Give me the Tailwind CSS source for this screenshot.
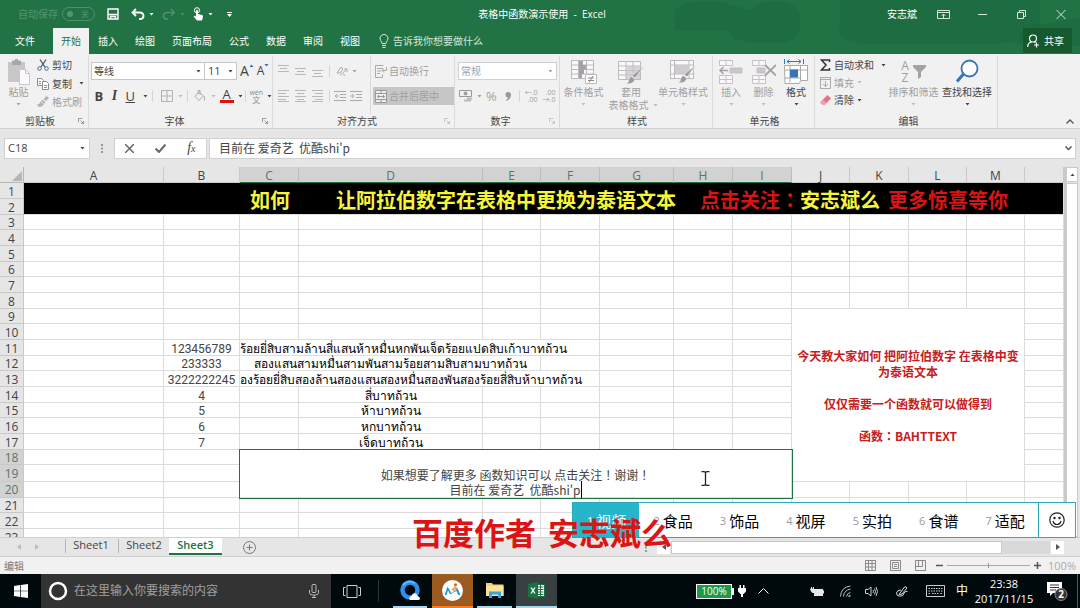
<!DOCTYPE html>
<html lang="zh-CN">
<head>
  <meta charset="UTF-8"/>
  <meta name="viewport" content="width=device-width, initial-scale=1.0"/>
  <title>表格中函数演示使用 - Excel</title>
  <script src="https://cdn.jsdelivr.net/npm/@tailwindcss/browser@4"></script>
</head>
<body class="relative flex h-screen flex-col overflow-hidden bg-[#e6e6e6] font-['Open_Sans','Noto_Sans_CJK_SC',sans-serif] text-[10px] leading-[14px] whitespace-nowrap text-[#444]">

  <svg class="hidden">
    <symbol id="caret" viewBox="0 0 5 3"><path d="M.5 0h4L2.500 2.500z" fill="currentColor"/></symbol>
    <symbol id="launcher" viewBox="0 0 7 7"><path d="M.5 5V.5H5M3 3l3 3M6.500 3.500v3h-3" fill="none" stroke="currentColor"/></symbol>
  </svg>

  <!-- Title bar -->
  <header class="relative shrink-0 bg-[#217346] text-white">
    <svg class="absolute top-0 right-0 h-[52px] w-[405px]" viewBox="0 0 405 52" fill="#1c653c" fill-opacity=".5">
      <path d="M0 10q12-12 45-8l30 8q10-10 28-9 22 2 22 18 4 22-20 24H78q-26-4-22-12L0 30z"/>
      <path d="M165 0h200v30q-10 12-50 14H190q-30-2-25-20z"/>
      <path d="M342 44q6-20 25-20l38-6v28z"/>
    </svg>
    <div class="relative flex h-7 items-center">
      <div class="flex flex-1 items-center pl-[18px]">
        <span class="text-[#56946f]">自动保存</span>
        <button class="ml-1 flex h-[14px] w-[33px] items-center rounded-full border border-[#4f8f6b] px-1 text-[#56946f]" aria-label="自动保存"><span class="mr-2 size-[6px] rounded-full bg-[#56946f]"></span><span class="text-[8px] leading-[10px]">关</span></button>
        <button class="ml-3" aria-label="保存"><svg class="size-3" viewBox="0 0 12 12" fill="none" stroke="#fff" stroke-width="1.400"><path d="M1 1h10v10H1z"/><path d="M1 6.500h10M3.500 11V8.500h5V11"/></svg></button>
        <button class="ml-3" aria-label="撤消"><svg class="h-3 w-[14px]" viewBox="0 0 14 12" fill="none" stroke="#fff" stroke-width="1.800"><path d="M5 1L1.500 4.500 5 8M2 4.500h6.500q4 .2 4 3.600Q12.300 11 9 11H8"/></svg></button>
        <svg class="ml-1 h-[3px] w-[5px]"><use href="#caret"/></svg>
        <button class="ml-2 text-[#4f8f6b]" aria-label="恢复"><svg class="h-3 w-[14px]" viewBox="0 0 14 12" fill="none" stroke="currentColor" stroke-width="1.500"><path d="M9 1l3.500 3.500L9 8M12 4.500H5.500q-4 .2-4 3.600Q1.700 11 5 11h1"/></svg></button>
        <svg class="ml-1 h-[3px] w-[5px] text-[#4f8f6b]"><use href="#caret"/></svg>
        <button class="ml-2" aria-label="触摸/鼠标模式"><svg class="h-[14px] w-[11px]" viewBox="0 0 11 14"><circle cx="4" cy="3.300" r="2.600" fill="none" stroke="#fff"/><path d="M3 3.500q1-1.300 2 0V7l4 1q1.300.4 1 2l-1 3.500H4L.6 9.500q.6-1.300 1.700-.6l.7.8z" fill="#fff"/></svg></button>
        <svg class="ml-1 h-[3px] w-[5px]"><use href="#caret"/></svg>
        <svg class="ml-[14px] h-[5px] w-[5px]" viewBox="0 0 5 5" fill="#fff"><path d="M0 0h5v1H0zM0 2h5L2.500 5z"/></svg>
      </div>
      <h1>表格中函数演示使用 &nbsp;- &nbsp;Excel</h1>
      <div class="flex flex-1 items-center justify-end pr-[14px]">
        <span>安志斌</span>
        <button class="ml-5" aria-label="功能区显示选项"><svg class="h-[9px] w-[13px]" viewBox="0 0 13 9" fill="none" stroke="#d5e5db"><path d="M.5.5h12v8H.5zM.5 2.500h12M6.500 8V4M4.500 6l2-2 2 2"/></svg></button>
        <button class="ml-7" aria-label="最小化"><svg class="h-[9px] w-[9px]" viewBox="0 0 9 9" stroke="#d5e5db"><path d="M0 4.500h9"/></svg></button>
        <button class="ml-[30px]" aria-label="还原"><svg class="h-[9px] w-[9px]" viewBox="0 0 9 9" fill="none" stroke="#d5e5db"><path d="M.5 2.500h6v6h-6zM2.500 2.500v-2h6v6h-2"/></svg></button>
        <button class="ml-[30px]" aria-label="关闭"><svg class="h-[9px] w-[10px]" viewBox="0 0 9 9" stroke="#d5e5db"><path d="M0 0l9 9M9 0L0 9"/></svg></button>
      </div>
    </div>

    <!-- Ribbon tabs -->
    <nav class="relative flex h-[26px] items-stretch gap-px">
      <a href="#" class="flex w-[52px] items-center pl-[15px]">文件</a>
      <a href="#" class="flex items-center bg-[#f1f1f1] px-2 text-[#217346]">开始</a>
      <a href="#" class="flex items-center px-2">插入</a>
      <a href="#" class="flex items-center px-2">绘图</a>
      <a href="#" class="flex items-center px-2">页面布局</a>
      <a href="#" class="flex items-center px-2">公式</a>
      <a href="#" class="flex items-center px-2">数据</a>
      <a href="#" class="flex items-center px-2">审阅</a>
      <a href="#" class="flex items-center px-2">视图</a>
      <a href="#" class="flex items-center gap-1 pl-[10px] text-[#d3e5da]"><svg class="h-[14px] w-[10px]" viewBox="0 0 10 14" fill="none" stroke="currentColor"><path d="M3 9.500Q3 8 1.700 6.700A4 4 0 1 1 8.300 6.700Q7 8 7 9.500zM3 11.500h4M3.500 13.500h3"/></svg>告诉我你想要做什么</a>
      <button class="mr-2 mb-px ml-auto flex w-[49px] items-center gap-1 bg-[#17592f] pl-1"><svg class="h-[14px] w-[13px]" viewBox="0 0 13 14" fill="none" stroke="#fff" stroke-width="1.200"><circle cx="6" cy="4.500" r="3.500"/><path d="M.7 13q0-4.500 4-5M7 8q1 0 1.500.7M9.500 8.500v5M7 11h5"/></svg>共享</button>
    </nav>
  </header>

  <!-- Ribbon -->
  <section class="flex h-[75px] shrink-0 border-b border-[#d2d2d2] bg-[#f1f1f1]">

    <div class="mt-[2px] flex w-[89px] shrink-0 flex-col border-r border-[#dadada]">
      <div class="flex flex-1">
        <button class="flex w-[37px] flex-col items-center pt-[3px] text-[#a19fa1]">
          <svg class="h-[26px] w-6" viewBox="0 0 24 26"><path d="M1 3h17v20H1z" fill="#c9c6c9"/><path d="M5 1.500h9V6H5z" fill="#a9a7a9"/><path d="M8 0h3v3H8z" fill="#a9a7a9"/><path d="M12.500 10.500h6l4 4v11h-10z" fill="#fbf9fb" stroke="#c9c6c9"/><path d="M18.500 10.500v4h4" fill="none" stroke="#c9c6c9"/></svg>
          粘贴
          <svg class="mt-1 h-[3px] w-[5px]"><use href="#caret"/></svg>
        </button>
        <div class="flex flex-col">
          <button class="flex h-[18px] items-center gap-[3px]"><svg class="size-3" viewBox="0 0 12 12" fill="none"><path d="M3 .5l5 7.500M9 .5L4 8" stroke="#555" stroke-width="1.300"/><circle cx="2.500" cy="9.500" r="1.800" stroke="#3a6ea5"/><circle cx="9.500" cy="9.500" r="1.800" stroke="#3a6ea5"/></svg>剪切</button>
          <button class="flex h-[19px] items-center gap-[3px]"><svg class="size-3" viewBox="0 0 12 12" fill="#fff" stroke="#8c8c8c"><path d="M.5.5h4l2 2v5h-6z"/><path d="M5.500 3.500h4l2 2v6h-6z"/><path d="M7 7.500h3M7 9.500h3M2 3.500h2M2 5.500h2" stroke="#6b93bd"/></svg>复制<svg class="ml-1 h-[3px] w-[5px]"><use href="#caret"/></svg></button>
          <button class="flex h-[18px] items-center gap-[3px] text-[#a19fa1]"><svg class="size-3" viewBox="0 0 12 12" fill="#b5b3b5"><path d="M9.500 0L12 2 9 5 6.500 3zM5.500 3.500l3 3L7 8 4 5zM3.500 5.500l3.300 3.300Q5 11 1.500 11L0 8.500q2.500 0 3.500-3z"/></svg>格式刷</button>
        </div>
      </div>
      <div class="flex h-[14px] items-center pr-1"><span class="flex-1 pl-[2px] text-center">剪贴板</span><svg class="size-[6px] text-[#888]"><use href="#launcher"/></svg></div>
    </div>

    <div class="mt-[2px] flex w-[184px] shrink-0 flex-col border-r border-[#dadada] pl-[2px]">
      <div class="flex flex-1 flex-col gap-[7px] pt-[6px]">
        <div class="flex h-[18px] items-center">
          <div class="flex h-[18px] w-[114px] items-center border border-[#c6c6c6] bg-white pr-[3px]"><select class="flex-1 appearance-none px-[2px]" aria-label="字体"><option>等线</option></select><svg class="h-[3px] w-[5px]"><use href="#caret"/></svg></div>
          <div class="-ml-px flex h-[18px] w-[33px] items-center border border-[#c6c6c6] bg-white pr-[3px]"><select class="w-5 flex-1 appearance-none px-[3px] text-[11px]" aria-label="字号"><option>11</option></select><svg class="h-[3px] w-[5px]"><use href="#caret"/></svg></div>
          <button class="ml-[3px] flex items-start text-[14px] font-medium" aria-label="增大字号">A<svg class="h-[3px] w-[5px] rotate-180 text-[#3a6ea5]"><use href="#caret"/></svg></button>
          <button class="ml-[3px] flex items-start text-[12px] font-medium" aria-label="减小字号">A<svg class="h-[3px] w-[5px] text-[#3a6ea5]"><use href="#caret"/></svg></button>
        </div>
        <div class="flex h-[18px] items-center text-[13px]">
          <button class="w-4 font-bold">B</button>
          <button class="w-4 font-['Liberation_Serif'] text-[14px] font-bold italic">I</button>
          <button class="w-4 underline">U</button>
          <svg class="ml-[5px] h-[3px] w-[5px]"><use href="#caret"/></svg>
          <span class="mx-1 h-3 w-px bg-[#d5d5d5]"></span>
          <button class="ml-1" aria-label="边框"><svg class="size-3" viewBox="0 0 12 12" fill="none" stroke="#b3b1b3"><path d="M.5.5h11v11H.5zM6 .5v11M.5 6h11"/></svg></button>
          <svg class="ml-[5px] h-[3px] w-[5px] text-[#bbb]"><use href="#caret"/></svg>
          <span class="mr-[6px] ml-1 h-3 w-px bg-[#d5d5d5]"></span>
          <button aria-label="填充颜色"><svg class="size-3" viewBox="0 0 12 12" fill="none" stroke="#aaa"><path d="M5 2L1 6.500l4 4 4.500-4.500zM4 4V.5h2V5M10.500 6.500v4"/></svg></button>
          <svg class="ml-[5px] h-[3px] w-[5px] text-[#bbb]"><use href="#caret"/></svg>
          <button class="ml-1 flex h-[14px] w-[14px] items-end justify-center border-b-3 border-[#e01010] leading-[12px]" aria-label="字体颜色">A</button>
          <svg class="ml-1 h-[3px] w-[5px]"><use href="#caret"/></svg>
          <span class="mx-[3px] h-3 w-px bg-[#d5d5d5]"></span>
          <button class="flex flex-col items-center text-[7px] leading-[7px] text-[#8c8c8c]" aria-label="拼音"><span>wén</span><span class="text-[8px]">文</span></button>
          <svg class="ml-1 h-[3px] w-[5px]"><use href="#caret"/></svg>
        </div>
      </div>
      <div class="flex h-[14px] items-center pr-1"><span class="flex-1 pr-1 text-center">字体</span><svg class="size-[6px] text-[#888]"><use href="#launcher"/></svg></div>
    </div>

    <div class="mt-[2px] flex w-[182px] shrink-0 flex-col border-r border-[#dadada] pl-[5px]">
      <div class="flex flex-1 text-[#a19fa1]">
        <div class="flex w-[92px] flex-col gap-[7px] pt-[6px]">
          <div class="flex h-[18px] items-center gap-[6px]">
            <button aria-label="顶端对齐"><svg class="h-3 w-[11px]" viewBox="0 0 11 12" stroke="#b9b7b9"><path d="M0 .5h11M2 3.500h7M0 6.500h11"/></svg></button>
            <button aria-label="垂直居中"><svg class="h-3 w-[11px]" viewBox="0 0 11 12" stroke="#b9b7b9"><path d="M0 3.500h11M2 6.500h7M0 9.500h11"/></svg></button>
            <button aria-label="底端对齐"><svg class="h-3 w-[11px]" viewBox="0 0 11 12" stroke="#b9b7b9"><path d="M0 5.500h11M2 8.500h7M0 11.500h11"/></svg></button>
            <span class="h-3 w-px bg-[#d5d5d5]"></span>
            <button aria-label="方向"><svg class="size-3" viewBox="0 0 12 12" fill="none" stroke="#aaa"><path d="M1 8l4-6 2 2-3 4zM4 10.500L11 4M11 7V4H8M7 9.500l2 1"/></svg></button>
            <svg class="-ml-[2px] h-[3px] w-[5px]"><use href="#caret"/></svg>
          </div>
          <div class="flex h-[18px] items-center gap-[6px]">
            <button aria-label="左对齐"><svg class="h-3 w-[11px]" viewBox="0 0 11 12" stroke="#b9b7b9"><path d="M0 .5h11M0 3.500h8M0 6.500h11M0 9.500h8M0 11.500h11"/></svg></button>
            <button aria-label="居中"><svg class="h-3 w-[11px]" viewBox="0 0 11 12" stroke="#b9b7b9"><path d="M0 .5h11M2 3.500h7M0 6.500h11M2 9.500h7M0 11.500h11"/></svg></button>
            <button aria-label="右对齐"><svg class="h-3 w-[11px]" viewBox="0 0 11 12" stroke="#b9b7b9"><path d="M0 .5h11M3 3.500h8M0 6.500h11M3 9.500h8M0 11.500h11"/></svg></button>
            <span class="-mr-[2px] h-3 w-px bg-[#d5d5d5]"></span>
            <button aria-label="减少缩进量"><svg class="h-[11px] w-3" viewBox="0 0 12 11" fill="none" stroke="#aaa"><path d="M0 .5h12M6 3.500h6M6 6.500h6M0 9.500h12M5 5H1M3 3L1 5l2 2"/></svg></button>
            <button class="-ml-[2px]" aria-label="增加缩进量"><svg class="h-[11px] w-3" viewBox="0 0 12 11" fill="none" stroke="#aaa"><path d="M0 .5h12M6 3.500h6M6 6.500h6M0 9.500h12M0 5h4M2 3l2 2-2 2"/></svg></button>
          </div>
        </div>
        <div class="flex flex-col gap-[7px] border-l border-[#dadada] pt-[6px] pl-[2px]">
          <button class="flex h-[18px] items-center gap-[2px] pl-[2px]"><svg class="h-[13px] w-3" viewBox="0 0 12 13" fill="none" stroke="#aaa"><path d="M.5.5h8M.5.500v12h7v-3M2 3.500h6M2 6h4M2 8.500h3M11.500 2v3.500h-4M9 3.500l-2 2 2 2"/></svg>自动换行</button>
          <button class="flex h-[18px] w-[81px] items-center gap-[2px] bg-[#c6c6c6] pl-[2px]"><svg class="h-[13px] w-3" viewBox="0 0 12 13" fill="#eee" stroke="#999"><path d="M.5.500h11v12H.5zM6 .5v3M6 9.500v3M.5 3.500h11v6H.5zM2.500 6.500h7M4 5L2.500 6.500 4 8M8 5l1.500 1.500L8 8"/></svg>合并后居中</button>
        </div>
      </div>
      <div class="flex h-[14px] items-center pr-1"><span class="flex-1 pr-2 text-center">对齐方式</span><svg class="size-[6px] text-[#bbb]"><use href="#launcher"/></svg></div>
    </div>

    <div class="mt-[2px] flex w-[105px] shrink-0 flex-col border-r border-[#dadada] pl-[3px]">
      <div class="flex flex-1 flex-col gap-[7px] pt-[6px] text-[#a19fa1]">
        <div class="flex h-[18px] w-[99px] items-center border border-[#d0d0d0] bg-white pr-[3px]"><select class="flex-1 appearance-none px-[2px]" aria-label="数字格式"><option>常规</option></select><svg class="h-[3px] w-[5px]"><use href="#caret"/></svg></div>
        <div class="flex h-[18px] items-center">
          <button class="ml-px" aria-label="会计数字格式"><svg class="h-3 w-[14px]" viewBox="0 0 14 12" fill="none" stroke="#999"><path d="M.5.5h12v6H.5z"/><circle cx="6.500" cy="3.500" r="1.500" fill="#999"/><path d="M8 8.500h5M5 10.500h7" stroke="#bbb" stroke-width="2"/></svg></button>
          <svg class="ml-1 h-[3px] w-[5px]"><use href="#caret"/></svg>
          <button class="ml-1 text-[13px]" aria-label="百分比样式">%</button>
          <button class="ml-2" aria-label="千位分隔样式"><svg class="h-[9px] w-[6px]" viewBox="0 0 6 9" fill="#999"><path d="M3 0q3 0 3 3 0 4-4.500 6L1 8q2-1.200 2.200-2.600Q.5 5.500.5 2.700.5 0 3 0z"/></svg></button>
          <span class="mr-[5px] ml-2 h-3 w-px bg-[#d5d5d5]"></span>
          <button class="flex flex-col items-end text-[7px] leading-[7px]" aria-label="增加小数位数"><span>←.0</span><span>.00</span></button>
          <button class="ml-[5px] flex flex-col items-end text-[7px] leading-[7px]" aria-label="减少小数位数"><span>.00</span><span>→.0</span></button>
        </div>
      </div>
      <div class="flex h-[14px] items-center pr-1"><span class="flex-1 pr-[6px] text-center">数字</span><svg class="size-[6px] text-[#bbb]"><use href="#launcher"/></svg></div>
    </div>

    <div class="mt-[2px] flex w-[153px] shrink-0 flex-col border-r border-[#dadada] pl-[2px]">
      <div class="flex flex-1 pt-[3px] text-[#a19fa1]">
        <button class="flex w-[43px] flex-col items-center">
          <svg class="h-[26px] w-[26px]" viewBox="0 0 26 26" fill="none" stroke="#bdb9bd"><path d="M.5 1.500h22v18H.5zM.5 6h22M.5 10.500h22M.5 15h22M7.500 1.500v18M15.500 1.500v18" fill="#fbf8fb"/><path d="M8 2h4v4H8zM8 6h7v4.500H8zM8 10.500h5V15H8zM8 15h3v4H8z" fill="#a5a1a5" stroke="none"/><path d="M14.500 15.500h11v9h-11z" fill="#fff"/><path d="M17 19h6M17 21.500h6M22 17l-4 6.500" stroke="#888"/></svg>
          条件格式
          <svg class="mt-1 h-[3px] w-[5px] text-[#bbb]"><use href="#caret"/></svg>
        </button>
        <button class="flex w-[52px] flex-col items-center">
          <svg class="h-[26px] w-[26px]" viewBox="0 0 26 26" fill="none" stroke="#bdb9bd"><path d="M.5 2.500h22v18H.5zM.5 7h22M.5 11.500h22M.5 16h22M8 2.500v18M15 2.500v18" fill="#fbf8fb"/><path d="M8 7h14v13H8z" fill="#c9c6c9" stroke="none" fill-opacity=".7"/><path d="M26 7L17 19l-3-2.500zM13.500 17.500l3.500 3q-2 5-9 4.500 3-1.500 2.500-4 1-3 3-3.500z" fill="#9d9a9d" stroke="#f1f1f1" stroke-width=".6"/></svg>
          <span>套用</span>
          <span class="-mt-px flex items-center gap-1 pl-1">表格格式<svg class="h-[3px] w-[5px] text-[#bbb]"><use href="#caret"/></svg></span>
        </button>
        <button class="flex w-[52px] flex-col items-center">
          <svg class="h-[26px] w-[26px]" viewBox="0 0 26 26" fill="none" stroke="#bdb9bd"><path d="M.5 1.500h23v18H.5zM.5 6h23M.5 15h23M4.500 1.500v18M19 1.500v18" fill="#fbf8fb"/><path d="M5 6h14v9H5z" fill="#cfcccf" stroke="none"/><path d="M26 6L17 18l-3-2.500zM13.500 16.500l3.500 3q-2 5-9 4.500 3-1.500 2.500-4 1-3 3-3.500z" fill="#9d9a9d" stroke="#f1f1f1" stroke-width=".6"/></svg>
          单元格样式
          <svg class="mt-1 h-[3px] w-[5px] text-[#bbb]"><use href="#caret"/></svg>
        </button>
      </div>
      <div class="h-[14px] text-center">样式</div>
    </div>

    <div class="mt-[2px] flex w-[102px] shrink-0 flex-col border-r border-[#dadada] pl-[2px]">
      <div class="flex flex-1 pt-[3px]">
        <button class="flex w-8 flex-col items-center text-[#a19fa1]">
          <svg class="h-[26px] w-6" viewBox="0 0 24 26" fill="#faf6fa" stroke="#c9bfc9"><path d="M.5 1.500h13v5H.5zM7 1.500v5M.5 16.500h13v8H.5zM7 16.500v8M.5 20.500h13"/><path d="M11 9h12v5H11z" fill="#c9c6c9"/><path d="M9 11.500H1M4.500 8L1 11.500 4.500 15" fill="none" stroke="#a5a1a5" stroke-width="1.500"/></svg>
          插入
          <svg class="mt-1 h-[3px] w-[5px] text-[#bbb]"><use href="#caret"/></svg>
        </button>
        <button class="flex w-[33px] flex-col items-center text-[#a19fa1]">
          <svg class="h-[26px] w-6" viewBox="0 0 24 26" fill="#faf6fa" stroke="#c9bfc9"><path d="M.5 1.500h13v5H.5zM7 1.500v5M.5 16.500h13v8H.5zM7 16.500v8M.5 20.500h13"/><path d="M5 9h8v5H5z" fill="#c9c6c9"/><path d="M13 6l11 10.500M24 6L13 16.500" fill="none" stroke="#a5a1a5" stroke-width="1.800"/></svg>
          删除
          <svg class="mt-1 h-[3px] w-[5px] text-[#bbb]"><use href="#caret"/></svg>
        </button>
        <button class="flex w-8 flex-col items-center">
          <svg class="h-[26px] w-6" viewBox="0 0 24 26" fill="#fff" stroke="#a9a9a9"><path d="M.5 6.500h23v15H17l-2 3H1z"/><path d="M.5 11h23M.5 19h17M6 6.500v17M16.500 6.500v15" fill="none"/><path d="M6 10.500h8v8H6z" fill="#3575b5" stroke="none"/><path d="M.5 0v5M19.500 0v5M3 2.500h14M5.500.500l-2.500 2 2.500 2M14.500.500l2.500 2-2.500 2" fill="none" stroke="#3575b5"/></svg>
          格式
          <svg class="mt-1 h-[3px] w-[5px]"><use href="#caret"/></svg>
        </button>
      </div>
      <div class="h-[14px] text-center">单元格</div>
    </div>

    <div class="mt-[2px] flex w-[183px] shrink-0 flex-col border-r border-[#dadada] pl-[5px]">
      <div class="flex flex-1">
        <div class="flex w-[67px] flex-col">
          <button class="flex h-[18px] items-center gap-[3px]"><svg class="h-3 w-[11px]" viewBox="0 0 11 12" fill="none" stroke="#333" stroke-width="1.500"><path d="M9.500 3V1H1.500L6 6l-4.500 5h8V9"/></svg>自动求和<svg class="ml-1 h-[3px] w-[5px]"><use href="#caret"/></svg></button>
          <button class="flex h-[17px] items-center gap-[3px] text-[#a19fa1]"><svg class="h-3 w-[11px]" viewBox="0 0 11 12" fill="none" stroke="#aaa"><path d="M.5.500h10v11H.5zM.5 2.500h10M5.500 4v5.500M3 7l2.500 2.500L8 7"/></svg>填充<svg class="h-[3px] w-[5px] text-[#bbb]"><use href="#caret"/></svg></button>
          <button class="flex h-[18px] items-center gap-[3px]"><svg class="h-3 w-[11px]" viewBox="0 0 11 12"><path d="M7.500 1L11 4.500 4.500 11 1 7.500z" fill="#e3728a"/><path d="M3 5.500L6.500 9l-2 2h-2L0 8.500z" fill="#ef9fb0"/></svg>清除<svg class="h-[3px] w-[5px]"><use href="#caret"/></svg></button>
        </div>
        <button class="flex w-[53px] flex-col items-center pt-[3px] text-[#a19fa1]">
          <span class="flex h-[26px] items-center"><span class="flex flex-col text-[12px] leading-[12px]"><span>A</span><span>Z</span></span><svg class="ml-1 h-[14px] w-[13px]" viewBox="0 0 13 14" fill="#a5a1a5"><path d="M0 0h13v2L8 7v5l-3 2V7L0 2z"/></svg></span>
          排序和筛选
          <svg class="mt-1 h-[3px] w-[5px] text-[#bbb]"><use href="#caret"/></svg>
        </button>
        <button class="flex w-[54px] flex-col items-center pt-[3px]">
          <svg class="h-[26px] w-6" viewBox="0 0 24 26" fill="#fff" stroke="#3575b5"><path d="M8.500 15L2 22.500" stroke-width="3"/><circle cx="14.500" cy="9.500" r="8" stroke-width="1.800"/></svg>
          查找和选择
          <svg class="mt-1 h-[3px] w-[5px]"><use href="#caret"/></svg>
        </button>
      </div>
      <div class="h-[14px] text-center">编辑</div>
    </div>

    <button class="mt-auto mr-[6px] mb-1 ml-auto" aria-label="折叠功能区"><svg class="h-[5px] w-2" viewBox="0 0 8 5" fill="none" stroke="#555" stroke-width="1.300"><path d="M.5 4.500L4 1l3.500 3.500"/></svg></button>
  </section>

  <!-- Formula bar -->
  <section class="flex h-[38px] shrink-0 items-center px-1">
    <div class="flex h-[21px] w-[86px] items-center border border-[#d0d0d0] bg-white pr-1">
      <input class="w-full flex-1 px-[3px] text-[11px] leading-4 outline-none" value="C18" aria-label="名称框"/>
      <svg class="h-[3px] w-[5px]"><use href="#caret"/></svg>
    </div>
    <svg class="mx-[11px] h-[9px] w-[2px]" viewBox="0 0 2 9" fill="#999"><path d="M0 0h2v2H0zM0 3.500h2v2H0zM0 7h2v2H0z"/></svg>
    <div class="flex h-[21px] w-[93px] items-center justify-around border border-[#d0d0d0] bg-white">
      <button aria-label="取消"><svg class="size-[9px]" viewBox="0 0 9 9" stroke="#666" stroke-width="1.500"><path d="M0 0l9 9M9 0L0 9"/></svg></button>
      <button aria-label="输入"><svg class="h-[9px] w-[11px]" viewBox="0 0 11 9" fill="none" stroke="#666" stroke-width="2"><path d="M.5 4.500L4 8l6.500-7.500"/></svg></button>
      <button class="font-['Liberation_Serif'] text-[14px] italic" aria-label="插入函数">f<span class="text-[10px]">x</span></button>
    </div>
    <div class="ml-[2px] flex h-[21px] flex-1 items-center border border-[#d0d0d0] bg-white pr-[3px]">
      <input class="flex-1 px-[9px] font-['Noto_Sans_CJK_SC',sans-serif] text-[12px] leading-4 outline-none" value="目前在 爱奇艺&nbsp; 优酷shi'p" aria-label="编辑栏"/>
      <svg class="h-[5px] w-[7px]" viewBox="0 0 7 5" fill="none" stroke="#555" stroke-width="1.500"><path d="M.5.500l3 3 3-3"/></svg>
    </div>
  </section>

  <!-- Worksheet -->
  <main class="flex min-h-0 flex-1 overflow-hidden">
    <div class="min-w-0 flex-1 overflow-hidden">
      <table class="w-full table-fixed border-separate border-spacing-0 text-[12px] leading-3 [&_td]:border-r [&_td]:border-b [&_td]:border-[#dcdcdc] [&_td]:bg-white [&_td]:p-0 [&_td]:pt-[2px] [&_td]:text-center [&_th]:p-0 [&_th]:pt-[2px] [&_th]:font-normal">
        <colgroup>
          <col class="w-6"><col class="w-[140px]"><col class="w-[76px]"><col class="w-[59px]"><col class="w-[184px]"><col class="w-[58px]"><col class="w-[59px]"><col class="w-[74px]"><col class="w-[59px]"><col class="w-[59px]"><col class="w-[58px]"><col class="w-[59px]"><col class="w-[58px]"><col class="w-[58px]"><col>
        </colgroup>
        <thead><tr id="letters" class="h-4"></tr></thead>
        <tbody id="cells"></tbody>
      </table>
    </div>
    <div class="flex w-4 shrink-0 flex-col border-l-2 border-[#c9c9c9] bg-[#e6e6e6] pr-[2px]">
      <button class="flex h-[15px] shrink-0 items-center justify-center border border-[#c9c9c9] bg-white" aria-label="向上滚动"><svg class="h-[3px] w-[5px] rotate-180"><use href="#caret"/></svg></button>
      <div class="mt-px flex-1 border border-[#c9c9c9] bg-white"></div>
    </div>
  </main>

  <!-- Sheet tabs -->
  <section class="flex h-[19px] shrink-0 items-stretch border-t border-[#cfcfcf] text-[11px] leading-3">
    <div class="flex w-[65px] items-center gap-[14px] pl-[17px] text-[#bdbdbd]">
      <svg class="h-[6px] w-1" viewBox="0 0 4 6" fill="currentColor"><path d="M4 0v6L0 3z"/></svg>
      <svg class="h-[6px] w-1" viewBox="0 0 4 6" fill="currentColor"><path d="M0 0v6l4-3z"/></svg>
    </div>
    <a href="#" class="mt-px mb-[3px] w-[53px] border-l border-[#b5b5b5] pr-[2px] text-center">Sheet1</a>
    <a href="#" class="mt-px mb-[3px] w-[51px] border-l border-[#b5b5b5] text-center">Sheet2</a>
    <a href="#" class="mb-px w-[53px] border-b-2 border-[#217346] bg-white pt-px text-center font-semibold text-[#217346]">Sheet3</a>
    <button class="ml-[21px]" aria-label="新工作表"><svg class="size-[13px]" viewBox="0 0 13 13" fill="none" stroke="#777"><circle cx="6.500" cy="6.500" r="6"/><path d="M6.500 3.500v6M3.500 6.500h6"/></svg></button>
    <div class="mr-4 ml-auto flex w-[419px] items-center gap-px">
      <svg class="mr-[9px] h-[9px] w-[2px]" viewBox="0 0 2 9" fill="#999"><path d="M0 0h2v2H0zM0 3.500h2v2H0zM0 7h2v2H0z"/></svg>
      <button class="flex h-[13px] w-[13px] items-center justify-center bg-white" aria-label="向左滚动"><svg class="h-[6px] w-1" viewBox="0 0 4 6" fill="#555"><path d="M4 0v6L0 3z"/></svg></button>
      <div class="flex h-[13px] flex-1 bg-[#d9d9d9]"><span class="w-[331px] border border-[#c9c9c9] bg-white"></span></div>
      <button class="flex h-[13px] w-[13px] items-center justify-center bg-white" aria-label="向右滚动"><svg class="h-[6px] w-1" viewBox="0 0 4 6" fill="#555"><path d="M0 0v6l4-3z"/></svg></button>
    </div>
  </section>

  <!-- Status bar -->
  <footer class="flex h-[18px] shrink-0 items-center border-t border-[#cfcfcf] bg-[#f1f1f1] px-1 text-[#777]">
    <span>编辑</span>
    <button class="ml-auto" aria-label="普通"><svg class="h-[11px] w-[11px]" viewBox="0 0 11 11" fill="none" stroke="#888"><path d="M.5.500h10v10H.5zM3.500.5v10M7 .5v10M.5 3.500h10M.5 7h10"/></svg></button>
    <button class="ml-[14px]" aria-label="页面布局"><svg class="h-[11px] w-[11px]" viewBox="0 0 11 11" fill="none" stroke="#888"><path d="M.5.500h10v10H.5zM2.500 2.500h6v6h-6zM4 4.500h3M4 6.500h3"/></svg></button>
    <button class="ml-[14px]" aria-label="分页预览"><svg class="h-[11px] w-[11px]" viewBox="0 0 11 11" fill="none" stroke="#888"><path d="M.5.500h10v10H.5zM3.500.5v6M7.500.500v6M.5 6.500h7"/></svg></button>
    <button class="ml-[10px] text-[#555]" aria-label="缩小"><svg class="size-[7px]" viewBox="0 0 7 7" stroke="currentColor" stroke-width="1.500"><path d="M0 3.500h7"/></svg></button>
    <input type="range" aria-label="显示比例" class="mx-1 h-[9px] w-[83px] appearance-none bg-[linear-gradient(#aaa,#aaa)] bg-[length:100%_1px] bg-center bg-no-repeat [&::-webkit-slider-thumb]:h-[5px] [&::-webkit-slider-thumb]:w-px [&::-webkit-slider-thumb]:appearance-none [&::-webkit-slider-thumb]:bg-[#999]"/>
    <button class="text-[#555]" aria-label="放大"><svg class="size-[7px]" viewBox="0 0 7 7" stroke="currentColor" stroke-width="1.500"><path d="M0 3.500h7M3.500 0v7"/></svg></button>
    <span class="ml-[7px] text-[11px] text-[#aaa]">100%</span>
  </footer>

  <!-- Taskbar -->
  <nav class="flex h-[34px] shrink-0 items-stretch bg-[#000a0c] text-white">
    <button class="flex w-[41px] items-center justify-center" aria-label="开始"><svg class="h-[14px] w-[14px]" viewBox="0 0 14 14" fill="#fff"><path d="M0 2l6-.9v5.600H0zM6.700 1L14 0v6.700H6.700zM0 7.300h6v5.600L0 12zM6.700 7.300H14V14l-7.300-1z"/></svg></button>
    <label class="flex w-[290px] items-center bg-[#333] pr-[12px] pl-[7px]">
      <svg class="size-5" viewBox="0 0 20 20" fill="none" stroke="#fff" stroke-width="2.500"><circle cx="10" cy="10" r="8"/></svg>
      <input class="ml-[6px] min-w-0 flex-1 text-[12px] outline-none placeholder:text-[#a0a0a0]" placeholder="在这里输入你要搜索的内容" aria-label="搜索"/>
      <svg class="h-[14px] w-[10px]" viewBox="0 0 10 14" fill="none" stroke="#bbb"><rect x="3" y=".5" width="4" height="8" rx="1"/><path d="M.5 6v2.500q0 2.500 3 2.500h3q3 0 3-2.500V6M5 11v2.500M3 13.500h4"/></svg>
    </label>
    <button class="flex w-[41px] items-center justify-center" aria-label="任务视图"><svg class="h-[13px] w-[18px]" viewBox="0 0 18 13" fill="none" stroke="#ccc"><path d="M4 .5h10v12H4zM2.500 2.500H.5v8h2M15.500 2.500h2v8h-2"/></svg></button>
    <span class="my-[6px] ml-[6px] w-px bg-[#2c3436]"></span>
    <button class="ml-[14px] flex w-[34px] items-center justify-center border-b-2 border-[#a5d8ec]" aria-label="QQ浏览器"><svg class="size-5" viewBox="0 0 20 20"><circle cx="10" cy="10" r="7.500" fill="none" stroke="#2a8ff0" stroke-width="4.500"/><path d="M3 5Q9-1 15 3.500" fill="none" stroke="#5db8ff" stroke-width="2"/><path d="M10 20q-2-3 1.500-4 1-3.500 4-2.500 2 .5 2 2.500 2.500.5 2.500 2.500 0 1.500-2 1.500z" fill="#fff"/></svg></button>
    <button class="ml-[5px] flex w-[41px] items-center justify-center border-b-2 border-[#ff7a1a] bg-[#9b5a20]" aria-label="爱剪辑"><svg class="size-[21px]" viewBox="0 0 21 21"><circle cx="10.500" cy="10.500" r="10.500" fill="#fff"/><path d="M2.500 15L5.500 6.500 10 14H8L6 10.500 4.500 15z" fill="#2b9ac8"/><path d="M8 14l6-4 1-3 3.500 8h-2.300L14.500 11z" fill="#2b9ac8"/><path d="M9.500 9.500L13 6l2.500 2-4 3.500z" fill="#f0a860"/><circle cx="13.500" cy="4.800" r="1.600" fill="#e06a2a"/></svg></button>
    <button class="ml-1 flex w-[35px] items-center justify-center border-b-2 border-[#a5d8ec]" aria-label="文件资源管理器"><svg class="h-4 w-[18px]" viewBox="0 0 18 16"><path d="M0 1h6l1 1.500h10.500V14H0z" fill="#f5d373"/><path d="M0 4h17.500v10H0z" fill="#fbe39a"/><path d="M3 16V9.500h12V16h-3v-3.500H6V16z" fill="#3aa4dc"/></svg></button>
    <button class="ml-1 flex w-[41px] items-center justify-center border-b-2 border-[#a5d8ec] bg-[#384042]" aria-label="Excel"><svg class="h-[17px] w-[17px]" viewBox="0 0 17 17"><path d="M9 2.500h7.500v12H9z" fill="#fff" stroke="#1d7044"/><path d="M10 5h5.500M10 7.500h5.500M10 10h5.500M10 12.500h5.500M12.500 3v11" stroke="#1d7044"/><path d="M0 2l10-2v17L0 15z" fill="#1d7044"/><path d="M3 5.500l4 6M7 5.500l-4 6" stroke="#fff" stroke-width="1.300"/></svg></button>

    <div class="ml-auto flex items-center">
      <span class="flex h-[15px] w-[36px] items-center justify-center border border-white bg-[#1d9a47] text-[10px] leading-3">100%</span><span class="h-[7px] w-[2px] bg-white"></span>
      <svg class="ml-1 h-3 w-2" viewBox="0 0 8 12" fill="#fff"><path d="M1.500 0h1.500v3h2V0h1.500v3H8v3.500L5.500 9H5v3H3V9h-.5L0 6.500V3h1.500z"/></svg>
      <svg class="ml-3 h-[6px] w-[11px]" viewBox="0 0 11 6" fill="none" stroke="#fff"><path d="M.5 5.500l5-5 5 5"/></svg>
      <svg class="ml-[41px] h-[9px] w-[14px]" viewBox="0 0 14 9" fill="#e8e8e8"><path d="M4 2h9v1.500h1v3h-1V9H4V6H2.500L1 4.500 0 2l1-.5V0h1v1.500h1V0h1z"/></svg>
      <svg class="ml-4 h-3 w-[11px]" viewBox="0 0 11 12" fill="none" stroke="#bbb"><path d="M.5 11.500Q1 2 10.500 1M3.500 11.500Q4 5 10.500 4.200M6.500 11.500Q7 8 10.500 7.400"/><circle cx="9.500" cy="11" r=".8"/></svg>
      <svg class="ml-[14px] h-[11px] w-[13px]" viewBox="0 0 13 11" fill="none" stroke="#ccc"><path d="M.5 3.500H3L6 1v9L3 7.500H.5zM8 4q1 1.500 0 3M9.500 2.500q2 3 0 6M11 1q3 4.500 0 9"/></svg>
      <svg class="ml-[18px] h-3 w-3" viewBox="0 0 12 12" fill="none" stroke="#ddd"><path d="M4 8L9 1.500l2 1.500-5 6-3 .5zM5 5Q1 5 .5 8q0 3.500 3.500 3.200Q8 11 8 8q1-2 3.500-1.500"/></svg>
      <svg class="ml-[18px] h-3 w-[19px]" viewBox="0 0 19 12" fill="none" stroke="#ccc"><path d="M.5.500h18v11H.5z"/><path d="M2.500 3.500h14M2.500 6h14M2.500 8.500h2M6 8.500h7M14.500 8.500h2" stroke-dasharray="1.500 1"/></svg>
      <span class="ml-[11px] text-[12px]">中</span>
      <time class="ml-[6px] w-[60px] text-center text-[11px] leading-[15px]">23:38<br>2017/11/15</time>
      <button class="mr-[9px] ml-[13px]" aria-label="通知"><svg class="h-5 w-[21px]" viewBox="0 0 21 20"><path d="M0 1h15v11H6l-3 3v-3H0z" fill="#fff"/><path d="M3 4h9M3 6.500h9M3 9h6" stroke="#333"/><circle cx="14" cy="13.500" r="6" fill="#333" stroke="#888"/><text x="14" y="17" text-anchor="middle" fill="#fff" font-size="10" font-weight="bold">2</text></svg></button>
      <span class="mr-[2px] h-[34px] w-px bg-[#555]"></span>
    </div>
  </nav>

  <!-- Mouse pointer -->
  <svg class="absolute top-[471px] left-[701px] h-[15px] w-[9px]" viewBox="0 0 9 15" fill="none" stroke="#222" stroke-width="1.300"><path d="M.5.700H3q1.500 0 1.500 1Q4.500.7 6 .7h2.500M.5 14.300H3q1.500 0 1.500-1 0 1 1.500 1h2.500M4.500 1.500v12"/></svg>

  <!-- Input method candidates -->
  <div class="absolute right-1 bottom-[70px] flex h-9 w-[504px] items-stretch border border-[#2fa8b5] bg-white text-[15px] text-black">
    <ol class="flex flex-1 items-stretch [&>li]:flex [&>li]:flex-1 [&>li]:items-center [&>li]:gap-[3px] [&>li]:pt-[2px] [&>li]:pl-[14px] [&_small]:text-[11px] [&_small]:text-[#999]">
      <li class="bg-[#27b5cb] text-white"><small class="text-white!">1</small>视频</li>
      <li><small>2</small>食品</li>
      <li><small>3</small>饰品</li>
      <li><small>4</small>视屏</li>
      <li><small>5</small>实拍</li>
      <li><small>6</small>食谱</li>
      <li><small>7</small>适配</li>
    </ol>
    <button class="flex w-[37px] items-center justify-center border-l border-[#2fa8b5]" aria-label="表情"><svg class="size-4" viewBox="0 0 16 16" fill="none" stroke="#222" stroke-width="1.200"><circle cx="8" cy="8" r="7.200"/><path d="M4 9q.8 3.500 4 3.500T12 9"/><circle cx="5.500" cy="6" r=".6" fill="#222"/><circle cx="10.500" cy="6" r=".6" fill="#222"/></svg></button>
  </div>

  <!-- Video caption -->
  <p class="absolute bottom-[58px] left-[412px] flex gap-3 font-['Noto_Sans_CJK_SC',sans-serif] text-[31px] leading-9 font-bold text-[#dc1414]"><span>百度作者</span><span>安志斌么</span></p>

  <script>
    const letters = ["A", "B", "C", "D", "E", "F", "G", "H", "I", "J", "K", "L", "M", ""];

    // full-width punctuation set in the middle of its square
    const mid = (s) => `<span class="font-['Noto_Sans_CJK_TC']" lang="zh-TW">${s}</span>`;

    // key is column letter + row number, value is [html, colspan, rowspan, classes]
    const cells = {
      A1: [`<div class="flex pl-[226px] font-['Noto_Sans_CJK_SC',sans-serif] text-[20px] leading-7 font-bold text-[#f5f53c]"><span>如何</span><span class="ml-[46px]">让阿拉伯数字在表格中更换为泰语文本</span><span class="ml-6 text-[#d81414]">点击关注${mid("：")}</span><span>安志斌么</span><span class="ml-2 text-[#d81414]">更多惊喜等你</span></div>`, 14, 2, "bg-black!"],
      J9: [`今天教大家如何 把阿拉伯数字 在表格中变<br>为泰语文本<br><br>仅仅需要一个函数就可以做得到<br><br>函数${mid("：")}BAHTTEXT`, 4, 11, "font-['Noto_Sans_CJK_SC',sans-serif] font-bold text-[#c62020] leading-4"],
      B11: ["123456789", 1, 1, "font-['Roboto']"],
      C11: ["ร้อยยี่สิบสามล้านสี่แสนห้าหมื่นหกพันเจ็ดร้อยแปดสิบเก้าบาทถ้วน", 4, 1, "text-left! text-black"],
      B12: ["233333", 1, 1, "font-['Roboto']"],
      C12: ["สองแสนสามหมื่นสามพันสามร้อยสามสิบสามบาทถ้วน", 3, 1, "text-black"],
      B13: ["3222222245", 1, 1, "font-['Roboto']"],
      C13: ["องร้อยยี่สิบสองล้านสองแสนสองหมื่นสองพันสองร้อยสี่สิบห้าบาทถ้วน", 4, 1, "text-left! text-black"],
      B14: ["4", 1, 1, "font-['Roboto']"],
      D14: ["สี่บาทถ้วน", 1, 1, "text-black"],
      B15: ["5", 1, 1, "font-['Roboto']"],
      D15: ["ห้าบาทถ้วน", 1, 1, "text-black"],
      B16: ["6", 1, 1, "font-['Roboto']"],
      D16: ["หกบาทถ้วน", 1, 1, "text-black"],
      B17: ["7", 1, 1, "font-['Roboto']"],
      D17: ["เจ็ดบาทถ้วน", 1, 1, "text-black"],
      C18: [`<br>如果想要了解更多 函数知识可以 点击关注${mid("！")}谢谢${mid("！")}<br>目前在 爱奇艺&nbsp; 优酷shi'p<span class="border-r border-black"></span>`, 7, 3, "font-['Noto_Sans_CJK_SC',sans-serif] leading-[15px] outline-1 outline-[#217346]"]
    };

    document.getElementById("letters").innerHTML =
      `<th class="border-r border-b border-[#b5b5b5]"><svg class="ml-auto h-3 w-3" viewBox="0 0 12 12"><path d="M11 1v10H1z" fill="#b5b5b5"/></svg></th>` +
      letters.map((l, i) => {
        const on = i >= 2 && i <= 8;
        return `<th class="${on ? "border-r border-b border-r-[#bdbdbd] border-b-[#217346] bg-[#d2d2d2] text-[#5a7566]" : "border-r border-b border-[#c9c9c9]"}">${l}</th>`;
      }).join("");

    const taken = new Set();
    let html = "";
    for (let r = 1; r <= 23; r++) {
      html += `<tr class="${r % 3 === 0 ? "h-[15px]" : "h-4"}">`;
      html += `<th class="border-r border-b border-[#c9c9c9] ${r >= 18 && r <= 20 ? "bg-[#d2d2d2] text-[#5a7566]" : ""}">${r}</th>`;
      letters.forEach((l, c) => {
        if (taken.has(r + "-" + c)) return;
        const [text, cols, rows, cls] = cells[l + r] || ["", 1, 1, ""];
        for (let y = 0; y < rows; y++)
          for (let x = 0; x < cols; x++) taken.add((r + y) + "-" + (c + x));
        html += `<td colspan="${cols}" rowspan="${rows}" class="${cls}">${text}</td>`;
      });
      html += "</tr>";
    }
    document.getElementById("cells").innerHTML = html;
  </script>
</body>
</html>
